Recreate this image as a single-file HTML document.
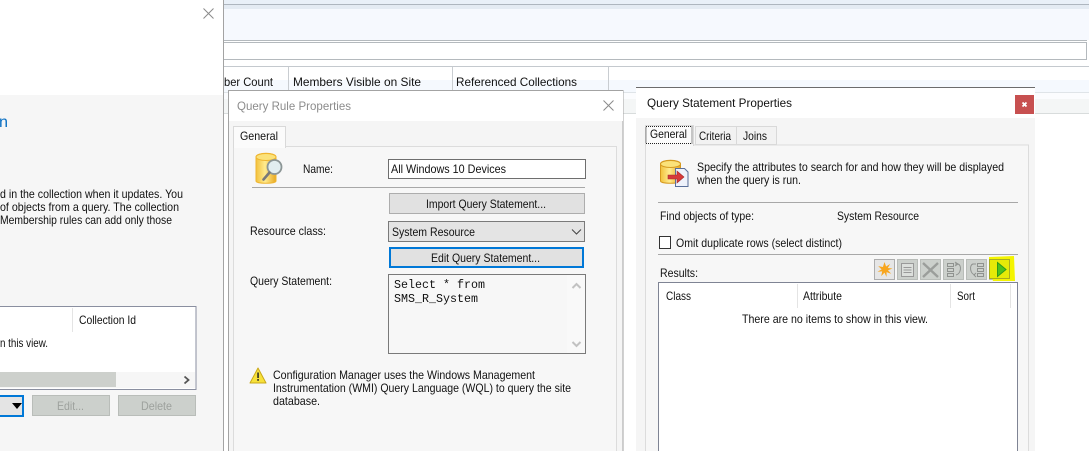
<!DOCTYPE html>
<html><head><meta charset="utf-8"><title>Query Statement Properties</title>
<style>
html,body{margin:0;padding:0;background:#fff;width:1089px;height:451px;overflow:hidden}
svg{display:block}
text{font-family:"Liberation Sans",sans-serif;font-size:12px;fill:#111}
.m{font-family:"Liberation Mono",monospace;font-size:11.5px}
</style></head><body>
<svg width="1089" height="451" viewBox="0 0 1089 451" xmlns="http://www.w3.org/2000/svg">
<defs>
<linearGradient id="cy" x1="0" x2="1" y1="0" y2="0"><stop offset="0" stop-color="#f2c13c"/><stop offset=".45" stop-color="#ffeb8f"/><stop offset="1" stop-color="#e8a820"/></linearGradient>
</defs>
<rect width="1089" height="451" fill="#fff"/>

<!-- background console -->
<rect x="224" y="0" width="865" height="4" fill="#e9f0f8"/>
<rect x="224" y="4" width="865" height="1" fill="#aeb6bf"/>
<rect x="224" y="5" width="865" height="4" fill="#e4ebf3"/>
<rect x="224" y="9" width="865" height="31" fill="#f6f9fe"/>
<rect x="224" y="40" width="865" height="27" fill="#fff"/>
<rect x="224" y="40" width="863" height="1" fill="#b4b9bd"/>
<rect x="224" y="42" width="862" height="1" fill="#b4b9bd"/>
<rect x="224" y="59" width="862" height="1" fill="#b4b9bd"/>
<rect x="1086" y="42" width="1" height="18" fill="#b4b9bd"/>
<rect x="224" y="66" width="865" height="1" fill="#c4c9ce"/>
<rect x="224" y="67" width="865" height="13" fill="#fff"/>
<rect x="224" y="80" width="865" height="14" fill="#f5f9fe"/>
<rect x="224" y="92" width="865" height="1" fill="#dfe4e8"/>
<rect x="224" y="93" width="865" height="6" fill="#fbfcfe"/>
<rect x="224" y="99" width="865" height="14" fill="#f4f6f6"/>
<rect x="224" y="113" width="865" height="1" fill="#d8dcdc"/>
<rect x="288" y="67" width="1" height="26" fill="#c9cdd1"/>
<rect x="452" y="67" width="1" height="26" fill="#c9cdd1"/>
<rect x="608" y="67" width="1" height="26" fill="#c9cdd1"/>
<text x="224" y="86" textLength="49" lengthAdjust="spacingAndGlyphs">ber Count</text>
<text x="293" y="86" textLength="128" lengthAdjust="spacingAndGlyphs">Members Visible on Site</text>
<text x="456" y="86" textLength="121" lengthAdjust="spacingAndGlyphs">Referenced Collections</text>

<!-- left panel -->
<rect x="0" y="0" width="223" height="95" fill="#fff"/>
<rect x="0" y="95" width="223" height="356" fill="#f6f6f6"/>
<rect x="223" y="0" width="1" height="451" fill="#a3a3a3"/>
<path d="M203.500 8.500L213.500 18.500M213.500 8.500L203.500 18.500" stroke="#8a8a8a" stroke-width="1" fill="none"/>
<text x="-1" y="127" style="font-size:16px;fill:#0a6fc2" textLength="9" lengthAdjust="spacingAndGlyphs">n</text>
<text x="0" y="198" textLength="183" lengthAdjust="spacingAndGlyphs">d in the collection when it updates. You</text>
<text x="0" y="211" textLength="179" lengthAdjust="spacingAndGlyphs">of objects from a query. The collection</text>
<text x="0" y="224" textLength="172" lengthAdjust="spacingAndGlyphs">Membership rules can add only those</text>
<rect x="-2" y="306.500" width="198" height="83" fill="#fff" stroke="#8a8fa0"/>
<rect x="72" y="308" width="1" height="24" fill="#e4e4e4"/>
<text x="79" y="324" textLength="57" lengthAdjust="spacingAndGlyphs">Collection Id</text>
<text x="0" y="347" textLength="48" lengthAdjust="spacingAndGlyphs">n this view.</text>
<rect x="0" y="372" width="195" height="16" fill="#f6f6f6"/>
<rect x="0" y="372" width="116" height="15" fill="#cdd0cc"/>
<path d="M184.500 376.500l4 3.500-4 3.500" stroke="#555" stroke-width="1.800" fill="none"/>
<rect x="-3" y="396" width="26" height="20" fill="#e4e4e4" stroke="#0078d7" stroke-width="2"/>
<path d="M12 403h10l-5 6z" fill="#000"/>
<rect x="32.500" y="395.500" width="77" height="20" fill="#ccd0cc" stroke="#b9bdb9"/>
<rect x="118.500" y="395.500" width="77" height="20" fill="#ccd0cc" stroke="#b9bdb9"/>
<text x="57" y="410" style="fill:#9da19d" textLength="27" lengthAdjust="spacingAndGlyphs">Edit...</text>
<text x="141" y="410" style="fill:#9da19d" textLength="31" lengthAdjust="spacingAndGlyphs">Delete</text>

<!-- Query Rule Properties -->
<rect x="228.500" y="90.500" width="394.500" height="370" fill="#f5f5f5" stroke="#a3a3a3"/>
<rect x="229" y="91" width="394" height="30" fill="#fff"/>
<text x="237" y="110" style="fill:#8c8c8c" textLength="114" lengthAdjust="spacingAndGlyphs">Query Rule Properties</text>
<path d="M603.500 100.500l10 10M613.500 100.500l-10 10" stroke="#8a8a8a" fill="none"/>
<rect x="233.500" y="146.500" width="383" height="310" fill="#f7f7f7" stroke="#dcdcdc"/>
<rect x="233.500" y="126.500" width="52" height="21" fill="#fbfbfb" stroke="#d9d9d9"/>
<rect x="234" y="146" width="51" height="2" fill="#fbfbfb"/>
<text x="240" y="140" textLength="38" lengthAdjust="spacingAndGlyphs">General</text>
<!-- db search icon -->
<path d="M256 157c0-5 20-5 20 0v24c0 3-20 3-20 0z" fill="url(#cy)" stroke="#efb52f"/>
<ellipse cx="266" cy="157" rx="10" ry="3.500" fill="#fbe27a" stroke="#efb52f"/>
<circle cx="274.500" cy="167" r="7" fill="#e2eef0" stroke="#8c9696" stroke-width="1.800"/>
<path d="M269.500 172.500l-6 7" stroke="#7a7a7a" stroke-width="2.600" stroke-linecap="round"/>
<rect x="252" y="187" width="333" height="1" fill="#a8a8a8"/>
<text x="303" y="173" textLength="30" lengthAdjust="spacingAndGlyphs">Name:</text>
<rect x="388.500" y="159.500" width="197" height="19" fill="#fff" stroke="#6e6e6e"/>
<text x="391" y="173" textLength="115" lengthAdjust="spacingAndGlyphs">All Windows 10 Devices</text>
<rect x="389.500" y="193.500" width="195" height="20" fill="#e1e1e1" stroke="#adadad"/>
<text x="426" y="208" textLength="120" lengthAdjust="spacingAndGlyphs">Import Query Statement...</text>
<text x="250" y="235" textLength="76" lengthAdjust="spacingAndGlyphs">Resource class:</text>
<rect x="388.500" y="221.500" width="196" height="20" fill="#e4e4e4" stroke="#7a7a7a"/>
<text x="392" y="236" textLength="83" lengthAdjust="spacingAndGlyphs">System Resource</text>
<path d="M572 229.500l4.500 4.500 4.500-4.500" stroke="#444" fill="none"/>
<rect x="390" y="248" width="193" height="19" fill="#e1e1e1" stroke="#0078d7" stroke-width="2"/>
<text x="431" y="262" textLength="109" lengthAdjust="spacingAndGlyphs">Edit Query Statement...</text>
<text x="250" y="285" textLength="82" lengthAdjust="spacingAndGlyphs">Query Statement:</text>
<rect x="388.500" y="274.500" width="197" height="79" fill="#f7f7f7" stroke="#7a7a7a"/>
<rect x="567" y="275" width="18" height="78" fill="#f9f9f9"/>
<text class="m" x="394" y="288" textLength="91" lengthAdjust="spacingAndGlyphs">Select * from</text>
<text class="m" x="394" y="302" textLength="84" lengthAdjust="spacingAndGlyphs">SMS_R_System</text>
<path d="M572.500 288l4-4 4 4M572.500 342l4 4 4-4" stroke="#c2c2c2" stroke-width="2" fill="none"/>
<path d="M258 368l8 15h-16z" fill="#f7e13a" stroke="#c9a818" stroke-linejoin="round"/>
<rect x="257.300" y="372.500" width="1.500" height="5.500" fill="#222"/>
<rect x="257.300" y="379" width="1.500" height="1.800" fill="#222"/>
<text x="273" y="379" textLength="262" lengthAdjust="spacingAndGlyphs">Configuration Manager uses the Windows Management</text>
<text x="273" y="392" textLength="298" lengthAdjust="spacingAndGlyphs">Instrumentation (WMI) Query Language (WQL) to query the site</text>
<text x="273" y="405" textLength="47" lengthAdjust="spacingAndGlyphs">database.</text>

<!-- Query Statement Properties -->
<rect x="636" y="87" width="399" height="364" fill="#f5f5f5"/>
<rect x="636" y="87" width="399" height="1" fill="#6c6c6c"/>
<rect x="636" y="88" width="399" height="30" fill="#fff"/>
<text x="647" y="107" textLength="145" lengthAdjust="spacingAndGlyphs">Query Statement Properties</text>
<rect x="1015" y="95" width="19" height="19" fill="#c75050"/>
<path d="M1022.500 102.500l4 4M1026.500 102.500l-4 4" stroke="#fff" stroke-width="1.800"/>
<rect x="645.500" y="145" width="383" height="310" fill="#f7f7f7" stroke="#dcdcdc"/>
<rect x="1029" y="118" width="6" height="333" fill="#f5f5f5"/>
<rect x="645.500" y="125.500" width="48" height="20" fill="#fbfbfb" stroke="#d9d9d9"/>
<rect x="646" y="144" width="47" height="3" fill="#f7f7f7"/>
<rect x="695.500" y="126.500" width="41" height="18" fill="#f2f2f2" stroke="#d9d9d9"/>
<rect x="736.500" y="126.500" width="40" height="18" fill="#f2f2f2" stroke="#d9d9d9"/>
<rect x="646" y="126.500" width="46" height="17" fill="none" stroke="#222" stroke-dasharray="1 1"/>
<text x="650" y="138" textLength="37" lengthAdjust="spacingAndGlyphs">General</text>
<text x="699" y="140" textLength="32" lengthAdjust="spacingAndGlyphs">Criteria</text>
<text x="743" y="140" textLength="24" lengthAdjust="spacingAndGlyphs">Joins</text>
<!-- db arrow icon -->
<path d="M660.500 164c0-5 20-5 20 0v17c0 3-20 3-20 0z" fill="url(#cy)" stroke="#d69a20"/>
<ellipse cx="670.500" cy="164" rx="10" ry="3.500" fill="#fbe27a" stroke="#d69a20"/>
<path d="M675.500 168.500h9l3.500 3.500v14.500h-12.500z" fill="#eef2fb" stroke="#5a6f9a"/>
<path d="M668 175h9v-4l7 6-7 6v-4h-9z" fill="#d63a3a" stroke="#a52a2a" stroke-width=".6"/>
<text x="697" y="171" textLength="307" lengthAdjust="spacingAndGlyphs">Specify the attributes to search for and how they will be displayed</text>
<text x="697" y="184" textLength="104" lengthAdjust="spacingAndGlyphs">when the query is run.</text>
<rect x="658" y="202" width="360" height="1" fill="#a8a8a8"/>
<text x="660" y="220" textLength="94" lengthAdjust="spacingAndGlyphs">Find objects of type:</text>
<text x="837" y="220" textLength="82" lengthAdjust="spacingAndGlyphs">System Resource</text>
<rect x="659.500" y="236.500" width="11" height="12" fill="#fff" stroke="#333"/>
<text x="676" y="247" textLength="166" lengthAdjust="spacingAndGlyphs">Omit duplicate rows (select distinct)</text>
<rect x="658" y="254" width="360" height="1" fill="#a8a8a8"/>
<text x="660" y="277" textLength="38" lengthAdjust="spacingAndGlyphs">Results:</text>
<!-- toolbar -->
<rect x="874.500" y="259.500" width="20" height="20" fill="#e6e6e6" stroke="#adadad"/>
<path d="M884.500 262l1.600 4.500 4-2.600-2.300 4.100 4.700.5-4.500 1.700 3.200 3.600-4.600-1.700-.1 4.900-2-4.400-3.300 3.500 1-4.700-4.700.3 4.100-2.300-3.400-3.300 4.700.9z" fill="#f7a51e"/>
<rect x="897.500" y="259.500" width="20" height="20" fill="#ccd0cc" stroke="#b9bdb9"/>
<rect x="901.500" y="263.500" width="12" height="13" fill="#dcdfdc" stroke="#999"/>
<path d="M903.500 267.500h8M903.500 270h8M903.500 272.500h8" stroke="#999"/>
<rect x="920.500" y="259.500" width="20" height="20" fill="#ccd0cc" stroke="#b9bdb9"/>
<path d="M923 263l15 14M938 263l-15 14" stroke="#9b9e9b" stroke-width="2.400"/>
<rect x="943.500" y="259.500" width="20" height="20" fill="#ccd0cc" stroke="#b9bdb9"/>
<rect x="947.500" y="263.500" width="6" height="3" fill="none" stroke="#8f928f"/>
<rect x="947.500" y="268.500" width="6" height="3" fill="none" stroke="#8f928f"/>
<rect x="947.500" y="273.500" width="6" height="3" fill="none" stroke="#8f928f"/>
<path d="M955 264h3c4 1 3 10-2 11M955 262l3 2-3 2" stroke="#8f928f" fill="none"/>
<rect x="966.500" y="259.500" width="20" height="20" fill="#ccd0cc" stroke="#b9bdb9"/>
<rect x="977.500" y="263.500" width="6" height="3" fill="none" stroke="#8f928f"/>
<rect x="977.500" y="268.500" width="6" height="3" fill="none" stroke="#8f928f"/>
<rect x="977.500" y="273.500" width="6" height="3" fill="none" stroke="#8f928f"/>
<path d="M976 264h-3c-4 1-3 10 2 11M976 273l-2 2 2 2" stroke="#8f928f" fill="none"/>
<rect x="989.500" y="259.500" width="20" height="20" fill="#f3f3f3" stroke="#b9bdb9"/>
<path d="M989 257l25-1 1 25-22 0-1-3-3 0z" fill="#f4f400"/>
<rect x="989.500" y="259.500" width="20" height="19" fill="#e6ea08" stroke="#a8ac20"/>
<path d="M997.500 262.500l8.500 7-8.500 7z" fill="#4cc21e" stroke="#2f9a18"/>
<!-- list -->
<rect x="658.500" y="282.500" width="359" height="180" fill="#fff" stroke="#7f8494"/>
<rect x="797" y="284" width="1" height="24" fill="#e4e4e4"/>
<rect x="950" y="284" width="1" height="24" fill="#e4e4e4"/>
<rect x="1010" y="284" width="1" height="24" fill="#e4e4e4"/>
<text x="666" y="300" textLength="25" lengthAdjust="spacingAndGlyphs">Class</text>
<text x="803" y="300" textLength="39" lengthAdjust="spacingAndGlyphs">Attribute</text>
<text x="957" y="300" textLength="18" lengthAdjust="spacingAndGlyphs">Sort</text>
<text x="742" y="323" textLength="186" lengthAdjust="spacingAndGlyphs">There are no items to show in this view.</text>
</svg>
</body></html>
